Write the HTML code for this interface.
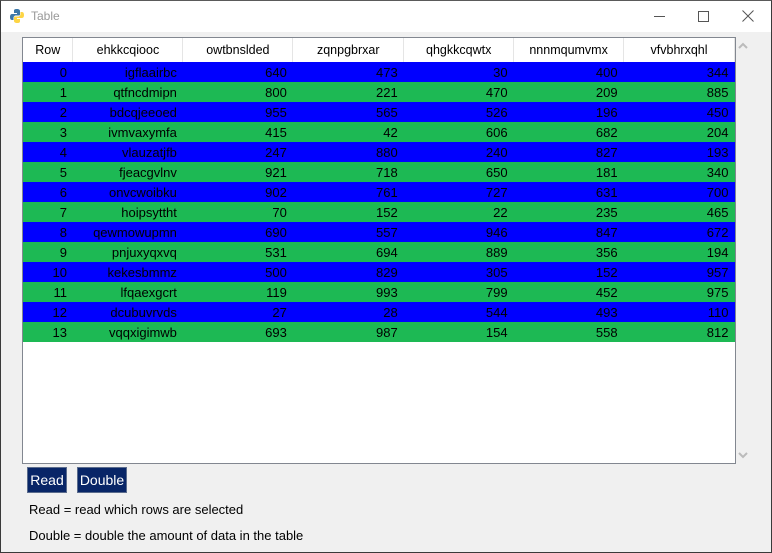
<!DOCTYPE html>
<html><head><style>
*{margin:0;padding:0;box-sizing:border-box}
body{width:772px;height:553px;background:#f0f0f0;font-family:"Liberation Sans",Arial,sans-serif;position:relative;overflow:hidden}
#win{position:absolute;left:0;top:0;width:772px;height:553px;border:1px solid #3a3a3a;border-top-color:#5a5a5a}
#title{position:absolute;left:0;top:0;width:770px;height:31px;background:#fff}
#title .t{position:absolute;left:30px;top:8px;font-size:12px;color:#999}
.ctl{position:absolute;top:8px;color:#555}
#tbl{position:absolute;left:21px;top:36px;width:714px;height:427px;background:#fff;border:1px solid #828790}
table{border-collapse:collapse;font-size:13px;position:absolute;left:0;top:0}
td,th{height:20px;padding:0 6px 0 0;text-align:right;color:#000;font-weight:normal;white-space:nowrap}
th{height:24px;text-align:center;padding:0;border-right:1px solid #e5e5e5;font-size:12.5px}
tr.b td{background:#0000ff}
tr.g td{background:#1db954}
.btn{position:absolute;top:466px;height:26px;background:#082567;color:#fff;font-size:14px;line-height:24px;text-align:center;border:1px solid #5a6b8c}
.txt{position:absolute;left:28px;font-size:13px;color:#000}
</style></head><body>
<div id="win">
<div id="title">
<svg style="position:absolute;left:8px;top:7px" width="16" height="16" viewBox="0 0 16 16"><path d="M8 1C5 1 5 2 5 3v2h3v1H3C1.5 6 1 7.5 1 9s.5 3 2 3h1.5v-2c0-1.5 1-2.5 2.5-2.5h3C11 7.5 11 7 11 6V3c0-1-1-2-3-2z" fill="#3b77a8"/><path d="M8 15c3 0 3-1 3-2v-2H8v-1h5c1.5 0 2-1.5 2-3s-.5-3-2-3h-1.5v2c0 1.5-1 2.5-2.5 2.5H6C5 8.5 5 9 5 10v3c0 1 1 2 3 2z" fill="#fdd545"/></svg>
<div class="t">Table</div>
<div class="ctl" style="left:653px;top:15px;width:11px;height:1px;background:#555"></div>
<div class="ctl" style="left:697px;top:10px;width:11px;height:11px;border:1px solid #555"></div>
<svg class="ctl" style="left:741px;top:9px" width="12" height="12"><path d="M0.5 0.5L11.5 11.5M11.5 0.5L0.5 11.5" stroke="#555" stroke-width="1"/></svg>
</div>
<div id="tbl"><table>
<colgroup><col style="width:50px"><col style="width:110px"><col style="width:110px"><col style="width:111px"><col style="width:110px"><col style="width:110px"><col style="width:111px"></colgroup>
<tr><th>Row</th><th>ehkkcqiooc</th><th>owtbnslded</th><th>zqnpgbrxar</th><th>qhgkkcqwtx</th><th>nnnmqumvmx</th><th>vfvbhrxqhl</th></tr>
<tr class="b"><td>0</td><td>igflaairbc</td><td>640</td><td>473</td><td>30</td><td>400</td><td>344</td></tr>
<tr class="g"><td>1</td><td>qtfncdmipn</td><td>800</td><td>221</td><td>470</td><td>209</td><td>885</td></tr>
<tr class="b"><td>2</td><td>bdcqjeeoed</td><td>955</td><td>565</td><td>526</td><td>196</td><td>450</td></tr>
<tr class="g"><td>3</td><td>ivmvaxymfa</td><td>415</td><td>42</td><td>606</td><td>682</td><td>204</td></tr>
<tr class="b"><td>4</td><td>vlauzatjfb</td><td>247</td><td>880</td><td>240</td><td>827</td><td>193</td></tr>
<tr class="g"><td>5</td><td>fjeacgvlnv</td><td>921</td><td>718</td><td>650</td><td>181</td><td>340</td></tr>
<tr class="b"><td>6</td><td>onvcwoibku</td><td>902</td><td>761</td><td>727</td><td>631</td><td>700</td></tr>
<tr class="g"><td>7</td><td>hoipsyttht</td><td>70</td><td>152</td><td>22</td><td>235</td><td>465</td></tr>
<tr class="b"><td>8</td><td>qewmowupmn</td><td>690</td><td>557</td><td>946</td><td>847</td><td>672</td></tr>
<tr class="g"><td>9</td><td>pnjuxyqxvq</td><td>531</td><td>694</td><td>889</td><td>356</td><td>194</td></tr>
<tr class="b"><td>10</td><td>kekesbmmz</td><td>500</td><td>829</td><td>305</td><td>152</td><td>957</td></tr>
<tr class="g"><td>11</td><td>lfqaexgcrt</td><td>119</td><td>993</td><td>799</td><td>452</td><td>975</td></tr>
<tr class="b"><td>12</td><td>dcubuvrvds</td><td>27</td><td>28</td><td>544</td><td>493</td><td>110</td></tr>
<tr class="g"><td>13</td><td>vqqxigimwb</td><td>693</td><td>987</td><td>154</td><td>558</td><td>812</td></tr>
</table></div>
<svg style="position:absolute;left:737px;top:41px" width="10" height="8"><path d="M1 6L5 2L9 6" stroke="#bbb" stroke-width="2" fill="none"/></svg>
<svg style="position:absolute;left:737px;top:450px" width="10" height="8"><path d="M1 2L5 6L9 2" stroke="#bbb" stroke-width="2" fill="none"/></svg>
<div class="btn" style="left:26px;width:40px">Read</div>
<div class="btn" style="left:76px;width:50px">Double</div>
<div class="txt" style="top:501px">Read = read which rows are selected</div>
<div class="txt" style="top:527px">Double = double the amount of data in the table</div>
</div>
</body></html>
